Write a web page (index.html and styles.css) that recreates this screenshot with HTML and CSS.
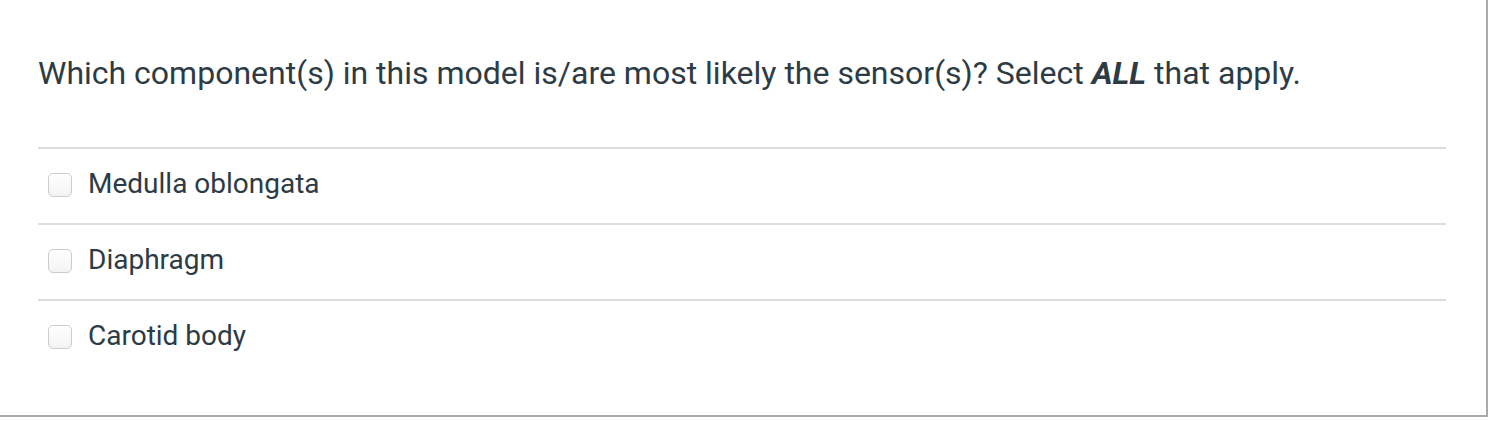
FILE: index.html
```html
<!DOCTYPE html>
<html>
<head>
<meta charset="utf-8">
<link rel="stylesheet" href="styles.css">
</head>
<body>
<div class="card">
  <div class="question">Which component(s) in this model is/are most likely the sensor(s)? Select <strong><em>ALL</em></strong> that apply.</div>
  <ul class="answers">
    <li class="answer"><span class="box"></span><span class="label">Medulla oblongata</span></li>
    <li class="answer"><span class="box"></span><span class="label">Diaphragm</span></li>
    <li class="answer"><span class="box"></span><span class="label">Carotid body</span></li>
  </ul>
</div>
</body>
</html>
```
FILE: styles.css
```css
html, body {
  margin: 0;
  padding: 0;
  background: #ffffff;
}
.card {
  width: 1486px;
  height: 415px;
  border-right: 2px solid #aaaaaa;
  border-bottom: 2px solid #aaaaaa;
  background: #ffffff;
  font-family: Roboto, "Liberation Sans", sans-serif;
  color: #2d3b45;
}
.question {
  padding: 49px 40px 0 38px;
  font-size: 32px;
  line-height: 48px;
}
.question strong {
  font-weight: 700;
}
.answers {
  list-style: none;
  margin: 50px 40px 0 38px;
  padding: 0;
}
.answer {
  box-sizing: border-box;
  display: flex;
  align-items: center;
  height: 76px;
  padding-bottom: 4px;
  border-top: 2px solid #dddddd;
}
.box {
  box-sizing: border-box;
  width: 24px;
  height: 24px;
  margin-left: 10px;
  margin-right: 16px;
  margin-top: 2px;
  border: 1px solid #c9cdd1;
  border-radius: 5px;
  background: linear-gradient(#ffffff, #f3f3f3);
}
.label {
  font-size: 28px;
  line-height: 40px;
}
```
